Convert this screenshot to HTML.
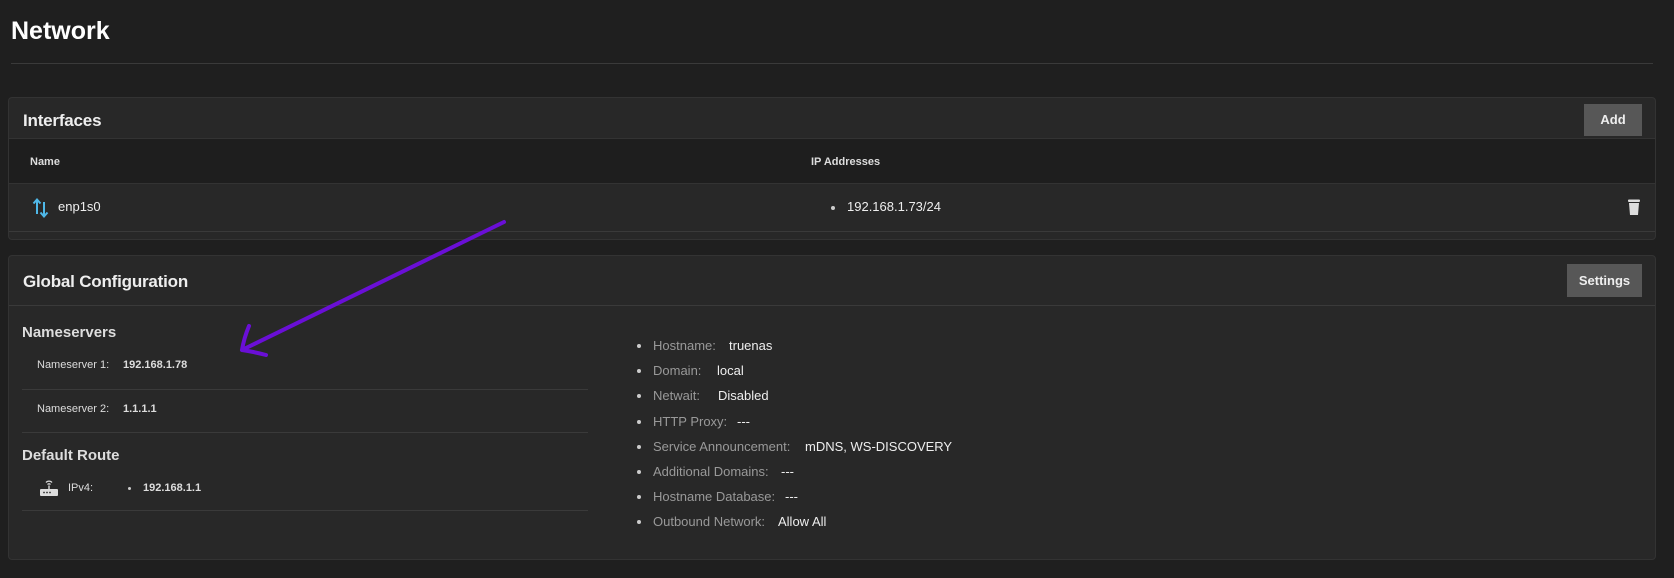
<!DOCTYPE html>
<html><head><meta charset="utf-8"><style>
*{margin:0;padding:0;box-sizing:border-box}
body{width:1674px;height:578px;background:#1f1f1f;font-family:"Liberation Sans",sans-serif;color:#e6e6e6;position:relative;overflow:hidden}
.a{position:absolute;white-space:nowrap}
.card{position:absolute;left:8px;width:1648px;background:#282828;border:1px solid #333;border-radius:4px}
.btn{position:absolute;background:#575757;color:#eee;font-weight:bold;font-size:13px;text-align:center}
.hl{position:absolute;height:1px;background:#3a3a3a}
.lbl{color:#999;font-size:13px}
.val{color:#eee;font-size:13px}
.sm{font-size:11px;color:#ddd}
.dot{position:absolute;width:4px;height:4px;border-radius:2px;background:#ccc}
</style></head><body>
<div class="a" style="left:11px;top:17px;font-size:25px;font-weight:bold;color:#fff">Network</div>
<div class="hl" style="left:11px;top:63px;width:1642px;background:#3a3a3a"></div>

<div class="card" style="top:97px;height:143px">
</div>
<div class="a" style="left:23px;top:111px;font-size:17px;font-weight:bold;color:#eee;letter-spacing:-0.2px">Interfaces</div>
<div class="btn" style="left:1584px;top:104px;width:58px;height:32px;line-height:32px">Add</div>
<div class="a" style="left:9px;top:138px;width:1646px;height:46px;background:#1e1e1e;border-top:1px solid #333;border-bottom:1px solid #333"></div>
<div class="a sm" style="left:30px;top:156px;font-weight:bold">Name</div>
<div class="a sm" style="left:811px;top:156px;font-weight:bold">IP Addresses</div>
<svg class="a" style="left:32px;top:197px" width="18" height="22" viewBox="0 0 18 22"><path d="M5 17V3M1.5 6.5L5 2.5 8.5 6.5M12 5v14M8.5 15.5L12 19.5 15.5 15.5" stroke="#4fb8e8" stroke-width="2" fill="none"/></svg>
<div class="a val" style="left:58px;top:199px">enp1s0</div>
<div class="dot" style="left:831px;top:206px"></div>
<div class="a val" style="left:847px;top:199px">192.168.1.73/24</div>
<svg class="a" style="left:1627px;top:198px" width="14" height="18" viewBox="0 0 14 18"><rect x="1" y="1.5" width="12" height="2.5" rx="1" fill="#ddd"/><path d="M2 5h10l-1 12H3z" fill="#ddd"/></svg>
<div class="hl" style="left:9px;top:231px;width:1646px;background:#3a3a3a"></div>

<div class="card" style="top:255px;height:305px"></div>
<div class="a" style="left:23px;top:272px;font-size:17px;font-weight:bold;color:#eee;letter-spacing:-0.2px">Global Configuration</div>
<div class="btn" style="left:1567px;top:264px;width:75px;height:33px;line-height:33px">Settings</div>
<div class="hl" style="left:9px;top:305px;width:1646px;background:#3a3a3a"></div>

<div class="a" style="left:22px;top:324px;font-size:15px;font-weight:bold;color:#ddd">Nameservers</div>
<div class="a sm" style="left:37px;top:359px">Nameserver 1:</div>
<div class="a sm" style="left:123px;top:359px;font-weight:bold">192.168.1.78</div>
<div class="hl" style="left:22px;top:389px;width:566px"></div>
<div class="a sm" style="left:37px;top:403px">Nameserver 2:</div>
<div class="a sm" style="left:123px;top:403px;font-weight:bold">1.1.1.1</div>
<div class="hl" style="left:22px;top:432px;width:566px"></div>
<div class="a" style="left:22px;top:447px;font-size:15px;font-weight:bold;color:#ddd">Default Route</div>
<svg class="a" style="left:39px;top:478px" width="20" height="20" viewBox="0 0 20 20"><path d="M7 4.5a4 4 0 0 1 6 0M8.5 6.5a2 2 0 0 1 3 0" stroke="#ddd" stroke-width="1.3" fill="none"/><rect x="9.3" y="7.5" width="1.4" height="4" fill="#ddd"/><rect x="1" y="11" width="18" height="7" rx="1" fill="#ddd"/><circle cx="5" cy="14.5" r="0.9" fill="#333"/><circle cx="8" cy="14.5" r="0.9" fill="#333"/><circle cx="11" cy="14.5" r="0.9" fill="#333"/></svg>
<div class="a sm" style="left:68px;top:482px">IPv4:</div>
<div class="dot" style="left:128px;top:487px;width:3px;height:3px"></div>
<div class="a sm" style="left:143px;top:482px;font-weight:bold">192.168.1.1</div>
<div class="hl" style="left:22px;top:510px;width:566px"></div>

<div class="dot" style="left:637px;top:344px"></div><div class="a lbl" style="left:653px;top:338px">Hostname:</div><div class="a val" style="left:729px;top:338px">truenas</div>
<div class="dot" style="left:637px;top:369px"></div><div class="a lbl" style="left:653px;top:363px">Domain:</div><div class="a val" style="left:717px;top:363px">local</div>
<div class="dot" style="left:637px;top:394px"></div><div class="a lbl" style="left:653px;top:388px">Netwait:</div><div class="a val" style="left:718px;top:388px">Disabled</div>
<div class="dot" style="left:637px;top:420px"></div><div class="a lbl" style="left:653px;top:414px">HTTP Proxy:</div><div class="a val" style="left:737px;top:414px">---</div>
<div class="dot" style="left:637px;top:445px"></div><div class="a lbl" style="left:653px;top:439px">Service Announcement:</div><div class="a val" style="left:805px;top:439px">mDNS, WS-DISCOVERY</div>
<div class="dot" style="left:637px;top:470px"></div><div class="a lbl" style="left:653px;top:464px">Additional Domains:</div><div class="a val" style="left:781px;top:464px">---</div>
<div class="dot" style="left:637px;top:495px"></div><div class="a lbl" style="left:653px;top:489px">Hostname Database:</div><div class="a val" style="left:785px;top:489px">---</div>
<div class="dot" style="left:637px;top:520px"></div><div class="a lbl" style="left:653px;top:514px">Outbound Network:</div><div class="a val" style="left:778px;top:514px">Allow All</div>

<svg class="a" style="left:0;top:0" width="1674" height="578"><path d="M504 222L242 350M249 326Q244 338 242 350Q255 352 266 355" stroke="#6a0fd6" stroke-width="4" fill="none" stroke-linecap="round" stroke-linejoin="round"/></svg>
</body></html>
